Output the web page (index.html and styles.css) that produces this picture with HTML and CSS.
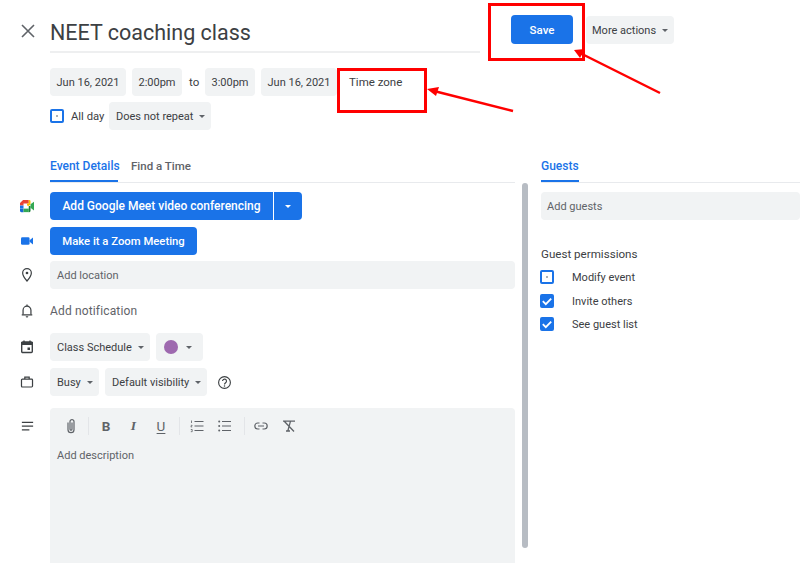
FILE: index.html
```html
<!DOCTYPE html>
<html lang="en">
<head>
<meta charset="utf-8">
<title>NEET coaching class</title>
<link rel="stylesheet" href="styles.css">
</head>
<body>
<div class="page">
  <header class="head">
    <div class="gutter close-cell">
      <svg class="ico i-close" viewBox="0 0 20 20"><path d="M4 4l12 12M16 4L4 16" stroke="#5f6368" stroke-width="1.6" fill="none"/></svg>
    </div>
    <h1 class="title">NEET coaching class</h1>
    <div class="actions">
      <button class="btn primary save">Save</button>
      <button class="chip more">More actions<span class="caret"></span></button>
    </div>
  </header>

  <div class="when">
    <div class="chip date-a">Jun 16, 2021</div>
    <div class="chip time">2:00pm</div>
    <span class="to">to</span>
    <div class="chip time">3:00pm</div>
    <div class="chip date-a">Jun 16, 2021</div>
    <span class="zone">Time zone</span>
  </div>
  <div class="allday">
    <span class="check"></span>
    <span class="allday-label">All day</span>
    <div class="chip repeat">Does not repeat<span class="caret"></span></div>
  </div>

  <div class="columns">
    <section class="left">
      <nav class="tabs">
        <span class="tab active details">Event Details</span>
        <span class="tab find">Find a Time</span>
      </nav>
      <div class="rows">
        <div class="row r-meet">
          <div class="gutter">
            <svg class="ico i-meet" viewBox="0 0 18 16"><path d="M1 4.500L4.500 1H11v4H5v2.500H1z" fill="#ea4335"/><path d="M1 7.500h4V11H1z" fill="#1a73e8"/><path d="M1 11h4v4H2.500A1.500 1.500 0 0 1 1 13.500z" fill="#1967d2"/><path d="M5 11h6v4H5z" fill="#34a853"/><path d="M11 1h.500A1.500 1.500 0 0 1 13 2.500V6l-2 2-2-.5V5h2z" fill="#fbbc04"/><path d="M11 8h2v5.500a1.500 1.500 0 0 1-1.500 1.500H11z" fill="#188038"/><path d="M13 6l4-3v10l-4-3z" fill="#34a853"/></svg>
          </div>
          <div class="split">
            <button class="btn primary meet">Add Google Meet video conferencing</button>
            <button class="btn primary meet-more"><span class="caret white"></span></button>
          </div>
        </div>
        <div class="row r-zoom">
          <div class="gutter">
            <svg class="ico i-zoom" viewBox="0 0 16 14"><rect x="1" y="2.500" width="10" height="9" rx="1.500" fill="#1a73e8"/><path d="M11 6l4-3v8l-4-3z" fill="#1a73e8"/></svg>
          </div>
          <button class="btn primary zoom">Make it a Zoom Meeting</button>
        </div>
        <div class="row r-loc">
          <div class="gutter">
            <svg class="ico i-pin" viewBox="0 0 16 20"><path d="M8 1.500a5.800 5.800 0 0 0-5.800 5.800C2.200 11.500 8 18 8 18s5.800-6.500 5.800-10.700A5.800 5.800 0 0 0 8 1.500z" fill="none" stroke="#3c4043" stroke-width="1.600"/><circle cx="8" cy="7.300" r="1.800" fill="#3c4043"/></svg>
          </div>
          <div class="field">Add location</div>
        </div>
        <div class="row r-notif">
          <div class="gutter">
            <svg class="ico i-bell" viewBox="0 0 16 18"><path d="M3.500 13V8a4.500 4.500 0 0 1 9 0v5" fill="none" stroke="#3c4043" stroke-width="1.400"/><path d="M2 13.300h12M8 1.500v2" stroke="#3c4043" stroke-width="1.400" fill="none"/><path d="M6.500 15h3a1.500 1.500 0 0 1-3 0z" fill="#3c4043"/></svg>
          </div>
          <span class="notif">Add notification</span>
        </div>
        <div class="row r-cal">
          <div class="gutter">
            <svg class="ico i-cal" viewBox="0 0 16 16"><rect x="2.700" y="3" width="10.600" height="10.500" rx="1" fill="none" stroke="#3c4043" stroke-width="1.400"/><path d="M2 3h12v3H2z" fill="#3c4043"/><path d="M5 1.500V3M11 1.500V3" stroke="#3c4043" stroke-width="1.400"/><rect x="8.500" y="8.500" width="2.500" height="2.500" fill="#3c4043"/></svg>
          </div>
          <div class="chips">
            <div class="chip cal">Class Schedule<span class="caret"></span></div>
            <div class="chip color"><span class="dot"></span><span class="caret"></span></div>
          </div>
        </div>
        <div class="row r-busy">
          <div class="gutter">
            <svg class="ico i-case" viewBox="0 0 16 16"><rect x="1.700" y="4.700" width="12.600" height="9" rx="1" fill="none" stroke="#3c4043" stroke-width="1.400"/><path d="M5.500 4.700V2.500h5v2.200" fill="none" stroke="#3c4043" stroke-width="1.400"/></svg>
          </div>
          <div class="chips">
            <div class="chip busy">Busy<span class="caret"></span></div>
            <div class="chip vis">Default visibility<span class="caret"></span></div>
            <svg class="help" viewBox="0 0 16 16"><circle cx="8" cy="8" r="6.300" fill="none" stroke="#3c4043" stroke-width="1.200"/><path d="M5.900 6.500a2.100 2.100 0 1 1 3.300 1.700c-.8.600-1.200 1-1.200 1.900" fill="none" stroke="#3c4043" stroke-width="1.200"/><circle cx="8" cy="11.700" r=".8" fill="#3c4043"/></svg>
          </div>
        </div>
        <div class="row r-desc">
          <div class="gutter desc-gutter">
            <svg class="ico i-lines" viewBox="0 0 16 16"><path d="M2 3.500h12M2 7.500h12M2 11.500h8" stroke="#3c4043" stroke-width="1.400"/></svg>
          </div>
          <div class="editor">
            <div class="toolbar">
              <svg class="tool attach" viewBox="0 0 16 16"><path d="M5 4.500v7.200a3 3 0 0 0 6 0V3.600a2 2 0 0 0-4 0v7.600a1 1 0 0 0 2 0V4.500" fill="none" stroke="#5f6368" stroke-width="1.200"/></svg>
              <span class="sep"></span>
              <span class="tool t-b">B</span>
              <span class="tool t-i">I</span>
              <span class="tool t-u">U</span>
              <span class="sep"></span>
              <svg class="tool" viewBox="0 0 16 16"><path d="M5.500 3.500h9M5.500 8h9M5.500 12.500h9" stroke="#5f6368" stroke-width="1.200"/><path d="M2.500 2.500v2.500M1.800 7.300h1.400l-1.400 1.600h1.400M1.800 11.500h1.400v2.200H1.800" stroke="#5f6368" stroke-width=".8" fill="none"/></svg>
              <svg class="tool" viewBox="0 0 16 16"><path d="M5 3.500h9M5 8h9M5 12.500h9" stroke="#5f6368" stroke-width="1.200"/><circle cx="2.200" cy="3.500" r="1" fill="#5f6368"/><circle cx="2.200" cy="8" r="1" fill="#5f6368"/><circle cx="2.200" cy="12.500" r="1" fill="#5f6368"/></svg>
              <span class="sep sep-last"></span>
              <svg class="tool" viewBox="0 0 16 16"><path d="M6.500 5H4.800a3 3 0 0 0 0 6h1.700M9.500 5h1.700a3 3 0 0 1 0 6H9.500M5 8h6" fill="none" stroke="#5f6368" stroke-width="1.200"/></svg>
              <svg class="tool" viewBox="0 0 16 16"><path d="M2 3.200h12M9.500 3.200L6.800 13M5 13h4M3 3l10 10.500" fill="none" stroke="#5f6368" stroke-width="1.300"/></svg>
            </div>
            <div class="desc">Add description</div>
          </div>
        </div>
      </div>
    </section>
    <div class="scroll"><div class="thumb"></div></div>
    <aside class="right">
      <nav class="tabs">
        <span class="tab active guests">Guests</span>
      </nav>
      <div class="field guest-field">Add guests</div>
      <div class="perm-title">Guest permissions</div>
      <label class="perm p1"><span class="check"></span>Modify event</label>
      <label class="perm p2"><span class="check on"><svg viewBox="0 0 14 14"><path d="M2.800 7.200l3 3 5.400-5.600" fill="none" stroke="#fff" stroke-width="1.800"/></svg></span>Invite others</label>
      <label class="perm p3"><span class="check on"><svg viewBox="0 0 14 14"><path d="M2.800 7.200l3 3 5.400-5.600" fill="none" stroke="#fff" stroke-width="1.800"/></svg></span>See guest list</label>
    </aside>
  </div>

  <div class="mark mark-save"></div>
  <div class="mark mark-zone"></div>
  <svg class="arrows" viewBox="0 0 800 563">
    <path d="M660 93L580 53" stroke="#f00" stroke-width="2.500" fill="none"/>
    <path d="M574 50l11-1-5 9z" fill="#f00"/>
    <path d="M513 111L434 91" stroke="#f00" stroke-width="2.500" fill="none"/>
    <path d="M427 89l12-2-3 9z" fill="#f00"/>
  </svg>
</div>
</body>
</html>
```

FILE: styles.css
```css
* { box-sizing: border-box; }
html, body { margin: 0; padding: 0; background: #fff; }
body { font-family: Roboto, "Liberation Sans", sans-serif; color: #3c4043; font-size: 11px; }
.page { position: relative; width: 800px; height: 563px; overflow: hidden; }
button { font: inherit; border: 0; margin: 0; color: inherit; padding: 0; }

.gutter { width: 50px; flex: none; display: flex; justify-content: center; align-items: center; padding-left: 4px; }
.ico { display: block; flex: none; }
.i-close { width: 20px; height: 20px; margin-left: 2px; }
.i-meet { width: 16px; height: 14px; }
.i-zoom { width: 14px; height: 12px; }
.i-pin { width: 12px; height: 16px; }
.i-bell { width: 14px; height: 16px; }
.i-cal { width: 16px; height: 16px; }
.i-case { width: 14px; height: 14px; }
.i-lines { width: 15px; height: 15px; }

.head { display: flex; height: 53px; padding-top: 15px; align-items: flex-start; }
.close-cell { height: 32px; }
.title { margin: 0; width: 430px; height: 38px; border-bottom: 2px solid #eeeff0; font-weight: 400; font-size: 21.500px; line-height: 36px; color: #3c4043; }
.actions { display: flex; margin-left: 31px; gap: 13px; }

.chip { background: #f1f3f4; border-radius: 4px; height: 28px; display: flex; align-items: center; padding: 0 7px; white-space: nowrap; flex: none; }
.caret { display: inline-block; width: 0; height: 0; border-left: 3px solid transparent; border-right: 3px solid transparent; border-top: 3px solid #5f6368; margin-left: 6px; }
.caret.white { border-top-color: #fff; margin: 0; }
.btn { border-radius: 4px; font-weight: 500; font-size: 12px; display: flex; align-items: center; justify-content: center; }
.primary { background: #1a73e8; color: #fff; }
.save { width: 62px; height: 29px; font-size: 11.500px; }
.more { margin-top: 1px; width: 88px; padding: 0 6px; justify-content: space-between; }

.when { display: flex; align-items: center; margin: 15px 0 0 50px; height: 28px; }
.date-a { width: 76px; justify-content: center; margin-right: 6px; }
.time { width: 50px; justify-content: center; margin-right: 6px; }
.to { width: 16px; margin-left: 1px; font-size: 11.500px; }
.zone { margin-left: 6px; margin-top: -1px; font-size: 11.500px; }

.allday { display: flex; align-items: center; height: 28px; margin: 6px 0 0 50px; }
.check { width: 14px; height: 14px; border: 2px solid #1a73e8; border-radius: 2px; flex: none; display: block; background: radial-gradient(circle, #aab0b6 .7px, #fff 1.200px); }
.check.on { background: #1a73e8; }
.check svg { display: block; width: 14px; height: 14px; margin: -2px; }
.allday-label { margin-left: 7px; width: 38px; font-size: 11.300px; }
.repeat { width: 102px; padding: 0 6px 0 7px; justify-content: space-between; }

.columns { display: flex; margin-top: 22px; align-items: flex-start; }
.left { width: 515px; flex: none; }
.tabs { display: flex; height: 31px; border-bottom: 1px solid #e8eaed; gap: 13px; align-items: flex-start; }
.left .tabs { margin-left: 50px; }
.tab { height: 30px; line-height: 28px; font-weight: 500; font-size: 12px; color: #5f6368; white-space: nowrap; }
.tab.active { color: #1a73e8; border-bottom: 2px solid #1a73e8; }
.details { width: 68px; }
.find { font-size: 11.500px; }
.rows { display: flex; flex-direction: column; }
.row { display: flex; align-items: center; }
.r-meet { margin-top: 9px; }
.r-zoom { margin-top: 7px; }
.r-loc { margin-top: 6px; }
.r-notif { margin-top: 14px; height: 16px; }
.r-cal { margin-top: 14px; }
.r-busy { margin-top: 7px; }
.r-desc { margin-top: 12px; align-items: flex-start; }
.split { display: flex; }
.meet { width: 223px; height: 28px; border-radius: 4px 0 0 4px; }
.meet-more { width: 29px; height: 28px; margin-left: 0; border-left: 1px solid #fff; border-radius: 0 4px 4px 0; }
.zoom { width: 147px; height: 28px; font-size: 11.300px; }
.field { background: #f1f3f4; border-radius: 4px; height: 28px; line-height: 30px; padding: 0 7px; width: 465px; color: #5f6368; }
.notif { font-weight: 400; font-size: 12px; letter-spacing: .15px; color: #5f6368; }
.chips { display: flex; gap: 6px; align-items: center; }
.cal { width: 100px; justify-content: space-between; padding: 1px 7px 0; }
.color { width: 47px; padding: 0 11px 0 8px; justify-content: space-between; }
.dot { width: 14px; height: 14px; border-radius: 50%; background: #9e69af; }
.busy { width: 49px; justify-content: space-between; padding: 1px 7px 0; }
.vis { width: 102px; justify-content: space-between; padding: 1px 6px 0 7px; }
.help { width: 15px; height: 15px; margin-left: 4px; }
.desc-gutter { height: 36px; }
.editor { width: 465px; height: 170px; background: #f1f3f4; border-radius: 4px 4px 0 0; }
.toolbar { display: flex; align-items: center; height: 36px; padding-left: 13px; }
.tool { width: 16px; height: 16px; margin-right: 11.500px; display: flex; align-items: center; justify-content: center; color: #5f6368; font-size: 13.500px; flex: none; }
.attach { margin-right: 9px; }
.t-b { font-weight: 700; }
.t-i { font-style: italic; font-family: "Liberation Serif", serif; font-weight: 700; }
.t-u { text-decoration: underline; text-underline-offset: 2px; margin-right: 10px; }
.sep { width: 1px; height: 18px; background: #e3e5e8; margin-right: 9px; }
.sep-last { margin-right: 8px; }
.desc { padding: 5px 7px; color: #5f6368; }

.scroll { width: 26px; flex: none; padding: 31px 0 0 7px; }
.thumb { width: 6px; height: 365px; background: #b7bcc3; border-radius: 3px; }
.right { flex: 1; }
.guest-field { margin-top: 9px; width: 259px; padding: 0 6px; }
.perm-title { margin-top: 27px; line-height: 14px; font-size: 11.600px; }
.perm { display: flex; align-items: center; height: 24px; }
.perm .check { margin: 0 18px 0 -1px; }
.p1 { margin-top: 4px; }
.p3 { margin-top: -1px; }

.mark { position: absolute; border: 3px solid #f00; }
.mark-save { left: 488px; top: 3px; width: 97px; height: 58px; }
.mark-zone { left: 337px; top: 68px; width: 90px; height: 45px; }
.arrows { position: absolute; left: 0; top: 0; width: 800px; height: 563px; pointer-events: none; }
```
